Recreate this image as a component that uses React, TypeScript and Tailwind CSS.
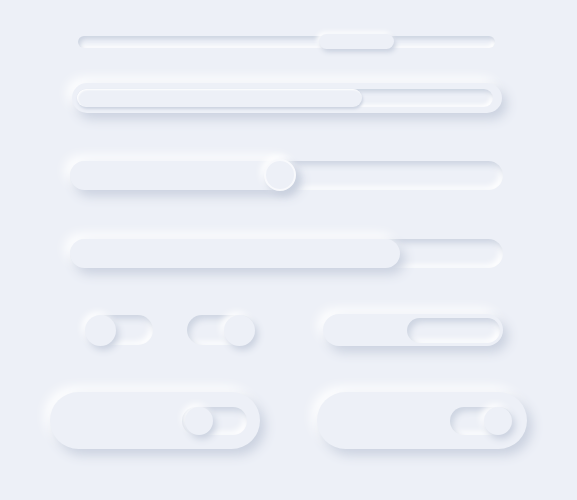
import React from "react";

const raised = "bg-[#edf0f7] shadow-[5px_6px_12px_#cad1df,-5px_-5px_12px_#ffffff]";
const raisedSm = "bg-[#edf0f7] shadow-[3px_4px_7px_#cad1df,-3px_-3px_7px_#ffffff]";
const inset = "bg-[#edf0f7] shadow-[inset_3px_4px_6px_#cdd4e1,inset_-3px_-3px_6px_#ffffff]";

function Knob({ size, ring = false }: { size: number; ring?: boolean }) {
  return (
    <div
      className={`rounded-full ${raisedSm} ${ring ? "border-2 border-[#f8f9fc]" : ""}`}
      style={{ width: size, height: size }}
    />
  );
}

export default function App() {
  return (
    <div className="w-[577px] h-[500px] bg-[#edf0f7] flex flex-col pt-[36px] overflow-hidden">
      {/* scrollbar-style track */}
      <div className="relative ml-[78px] w-[417px] h-[12px] rounded-full bg-[#edf0f7] shadow-[inset_2px_3px_4px_#cdd4e1,inset_-2px_-2px_4px_#ffffff]">
        <div className="absolute left-[241px] top-[-2px] w-[75px] h-[15px] rounded-full bg-[#edf0f7] shadow-[2px_3px_5px_#cad1df,-2px_-2px_5px_#ffffff]" />
      </div>

      {/* progress bar in raised frame */}
      <div className={`mt-[35px] ml-[72px] w-[430px] h-[30px] rounded-full ${raised} flex items-center pl-[5px]`}>
        <div className="w-[416px] h-[18px] rounded-full bg-[#edf0f7] shadow-[inset_2px_3px_4px_#cdd4e1,inset_-2px_-2px_4px_#ffffff] flex">
          <div className="w-[285px] h-[18px] rounded-full bg-[#edf0f7] shadow-[1px_2px_3px_#cbd2e0,inset_1px_1px_2px_#ffffff]" />
        </div>
      </div>

      {/* slider with knob */}
      <div className={`relative mt-[48px] ml-[70px] w-[433px] h-[29px] rounded-full ${inset}`}>
        <div className={`absolute left-0 top-0 w-[226px] h-[29px] rounded-full ${raised}`} />
        <div className="absolute left-[194px] top-[-2px]">
          <Knob size={32} ring />
        </div>
      </div>

      {/* filled progress */}
      <div className={`relative mt-[49px] ml-[70px] w-[433px] h-[29px] rounded-full ${inset}`}>
        <div className={`absolute left-0 top-0 w-[330px] h-[29px] rounded-full ${raised}`} />
      </div>

      {/* small toggles */}
      <div className="mt-[45px] flex items-center h-[34px]">
        <div className="relative ml-[85px] w-[68px] h-[31px] flex items-center">
          <div className={`absolute right-0 w-[66px] h-[30px] rounded-full ${inset}`} />
          <div className="relative">
            <Knob size={31} />
          </div>
        </div>
        <div className="relative ml-[34px] w-[68px] h-[31px] flex items-center justify-end">
          <div className={`absolute left-0 w-[68px] h-[30px] rounded-full ${inset}`} />
          <div className="relative">
            <Knob size={31} />
          </div>
        </div>
        <div className={`ml-[68px] w-[180px] h-[32px] rounded-full ${raised} flex items-center justify-end pr-[3px]`}>
          <div className={`w-[93px] h-[25px] rounded-full ${inset}`} />
        </div>
      </div>

      {/* large cards with toggles */}
      <div className="mt-[45px] ml-[50px] flex gap-[57px]">
        <div className={`w-[210px] h-[57px] rounded-full ${raised} flex items-center pl-[132px]`}>
          <div className={`relative w-[65px] h-[28px] rounded-full ${inset} flex items-center pl-[3px]`}>
            <Knob size={28} />
          </div>
        </div>
        <div className={`w-[210px] h-[57px] rounded-full ${raised} flex items-center pl-[133px]`}>
          <div className={`relative w-[63px] h-[28px] rounded-full ${inset} flex items-center justify-end pr-[1px]`}>
            <Knob size={28} />
          </div>
        </div>
      </div>
    </div>
  );
}
